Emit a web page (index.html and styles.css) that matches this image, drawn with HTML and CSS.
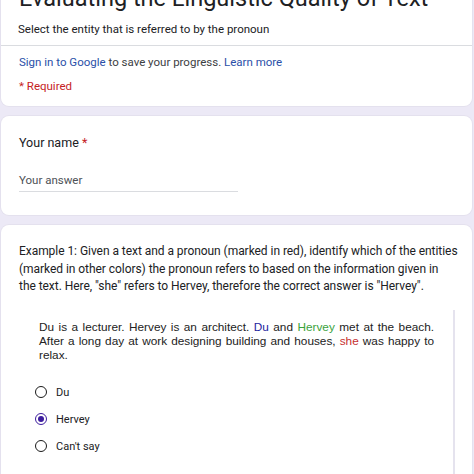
FILE: index.html
```html
<!DOCTYPE html>
<html>
<head>
<meta charset="utf-8">
<link rel="stylesheet" href="styles.css">
</head>
<body>
<div class="page">
  <section class="card head-card">
    <h1 class="title">Evaluating the Linguistic Quality of Text</h1>
    <p class="desc">Select the entity that is referred to by the pronoun</p>
    <div class="divider"></div>
    <p class="signin"><a class="link">Sign in to Google</a> to save your progress. <a class="link">Learn more</a></p>
    <p class="required">* Required</p>
  </section>
  <section class="card name-card">
    <p class="q-title">Your name <span class="star">*</span></p>
    <div class="answer">Your answer</div>
  </section>
  <section class="card example-card">
    <p class="example">Example 1: Given a text and a pronoun (marked in red), identify which of the entities (marked in other colors) the pronoun refers to based on the information given in <span class="nw">the text.</span> Here, "she" refers to Hervey, therefore the correct answer is "Hervey".</p>
    <div class="quote">
      <p class="passage">Du is a lecturer. Hervey is an architect. <span class="c-du">Du</span> and <span class="c-hervey">Hervey</span> met at the beach. After a long day at work designing building and houses, <span class="c-she">she</span> was happy to relax.</p>
      <div class="options">
        <div class="option"><span class="radio"></span><span class="opt-label">Du</span></div>
        <div class="option"><span class="radio checked"><span class="dot"></span></span><span class="opt-label">Hervey</span></div>
        <div class="option"><span class="radio"></span><span class="opt-label">Can't say</span></div>
      </div>
    </div>
  </section>
</div>
</body>
</html>
```
FILE: styles.css
```css
html, body {
  margin: 0;
  padding: 0;
  background: #ece9f6;
  overflow: hidden;
}
body {
  width: 474px;
  height: 474px;
  font-family: Roboto, "Noto Sans", Arial, sans-serif;
  color: #202124;
}
.page {
  display: flex;
  flex-direction: column;
  gap: 10px;
  padding: 0 2px 0 1px;
}
.card {
  background: #fff;
  border-radius: 8px;
  box-shadow: 0 0 0 1px #e4e1ee;
}
.head-card {
  margin-top: -16px;
  padding: 0 0 12px 0;
}
.title {
  margin: 0;
  padding: 0 0 0 18px;
  font-size: 23.5px;
  font-weight: 400;
  line-height: 28px;
  color: #202124;
  white-space: nowrap;
}
.desc {
  margin: 9px 0 0 0;
  padding-left: 17px;
  font-size: 11.5px;
  line-height: 16px;
}
.divider {
  height: 1px;
  background: #dadce0;
  margin-top: 8px;
}
.signin {
  margin: 8px 0 0 0;
  padding-left: 18px;
  font-size: 11.5px;
  line-height: 16px;
  color: #3c4043;
}
.link {
  color: #2a4fa8;
}
.required {
  margin: 8px 0 0 0;
  padding-left: 18px;
  font-size: 11.5px;
  line-height: 16px;
  color: #c5221f;
}
.name-card {
  height: 99px;
  box-sizing: border-box;
  padding: 19px 18px 0 18px;
}
.q-title {
  margin: 0;
  font-size: 12.5px;
  line-height: 16px;
  color: #202124;
}
.star {
  color: #c5221f;
}
.answer {
  margin-top: 21px;
  width: 219px;
  font-size: 11.5px;
  line-height: 16px;
  color: #4d5156;
  padding-bottom: 3px;
  border-bottom: 1px solid #dadce0;
}
.example-card {
  flex: 1;
  padding: 18px 0 0 18px;
  min-height: 260px;
}
.example {
  margin: 0 13.5px 0 0;
  font-size: 12px;
  line-height: 17.6px;
  color: #202124;
  letter-spacing: -0.05px;
}
.nw {
  white-space: nowrap;
}
.quote {
  margin: 14px 17px 0 0;
  padding: 10px 19px 0 20px;
  border-right: 2px solid #e5e3ee;
}
.passage {
  margin: 0;
  font-family: "Liberation Sans", Arial, sans-serif;
  font-size: 11.8px;
  line-height: 14.3px;
  text-align: justify;
  color: #222;
}
.c-du { color: #24249e; }
.c-hervey { color: #3aa23c; }
.c-she { color: #c62f2f; }
.options {
  display: flex;
  flex-direction: column;
  gap: 14px;
  padding: 23px 0 30px 0;
  margin-left: -4px;
}
.option {
  display: flex;
  align-items: center;
  gap: 9px;
  height: 13px;
}
.radio {
  width: 10px;
  height: 10px;
  border: 1.8px solid #1a1a1a;
  border-radius: 50%;
  display: flex;
  align-items: center;
  justify-content: center;
  flex: none;
}
.radio.checked {
  border-color: #3d1d9e;
}
.dot {
  width: 6px;
  height: 6px;
  border-radius: 50%;
  background: #3d1d9e;
}
.opt-label {
  font-size: 11px;
  color: #202124;
}
```
